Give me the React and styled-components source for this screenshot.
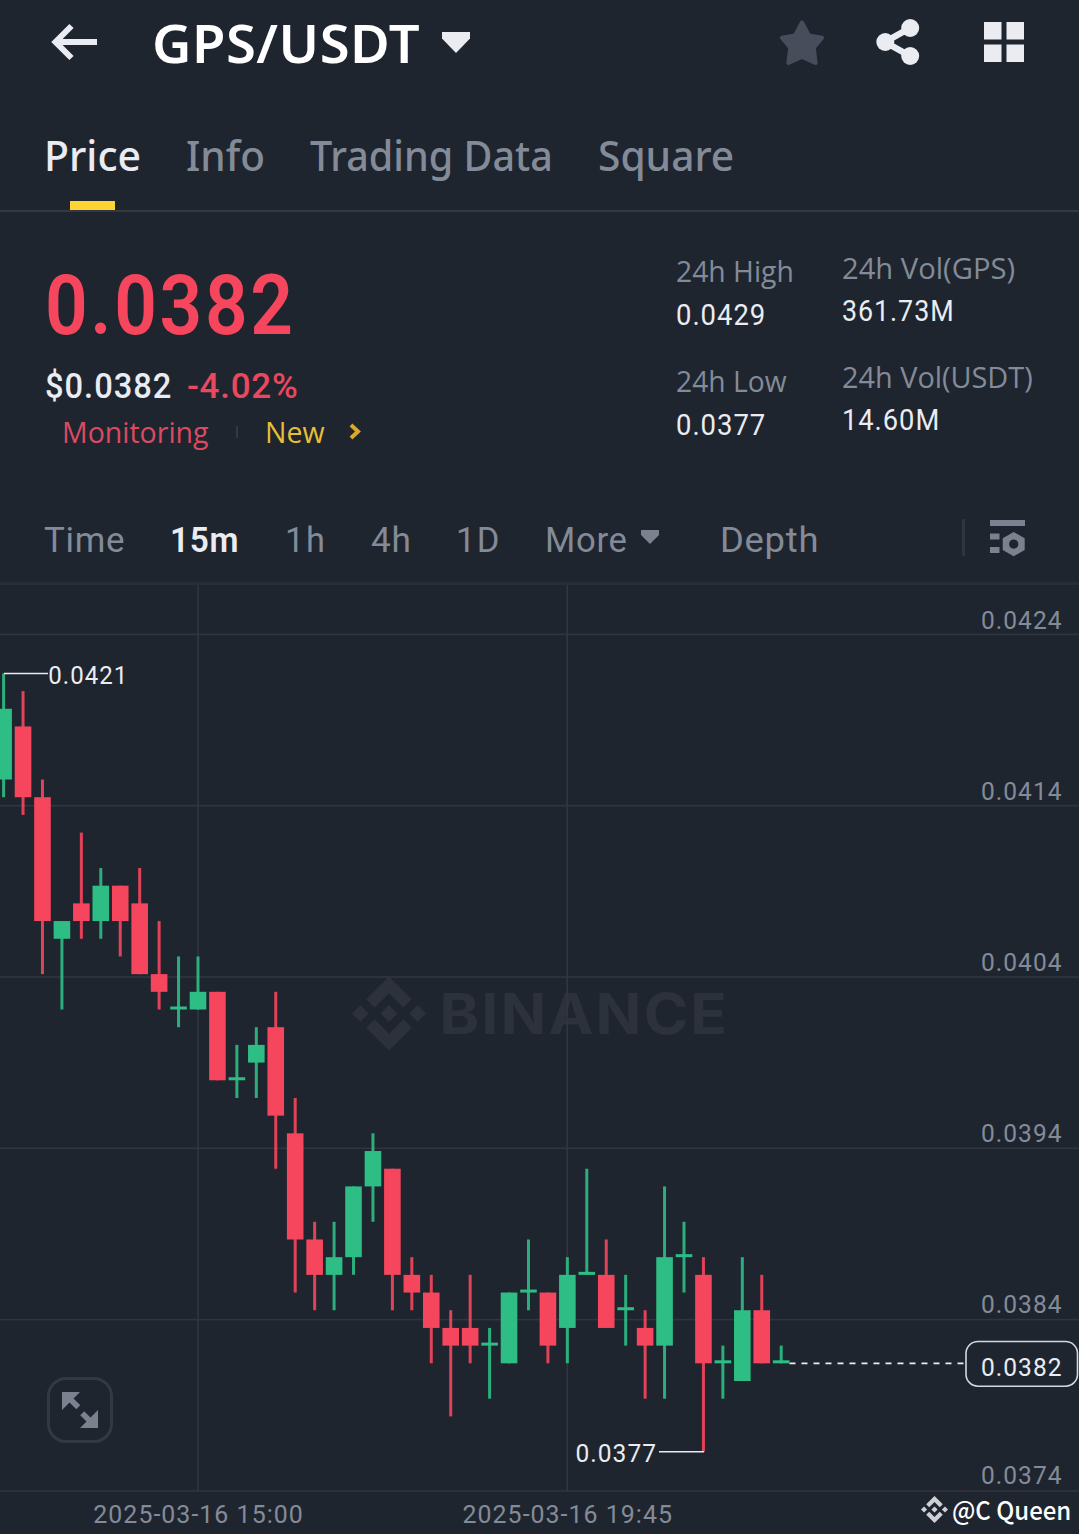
import { useLayoutEffect, useRef, useState } from "react";
import styled, { createGlobalStyle, css } from "styled-components";

const colors = {
  bg: "#1f252f",
  line: "#333842",
  grid: "#31353f",
  muted: "#848b98",
  icon: "#7b818e",
  text: "#eaecf2",
  red: "#f6465d",
  green: "#2ebd85",
  yellow: "#fcd535",
};

const din = '"Roboto", "Liberation Sans", sans-serif';
const plex = '"Open Sans", "Noto Sans", sans-serif';
const plexMedium = '"Noto Sans", "Open Sans", sans-serif';

const GlobalStyle = createGlobalStyle`
  body {
    margin: 0;
    background-color: ${colors.bg};
    overflow: hidden;
  }
`;

const Page = styled.div`
  width: 1079px;
  height: 1534px;
  overflow: hidden;
  background-color: ${colors.bg};
  color: ${colors.text};
`;

const LabelBox = styled.span`
  display: block;
  flex: none;
  white-space: nowrap;
  width: ${({ $width }) => $width}px;
  font-family: ${({ $font }) => $font || din};
  font-size: ${({ $size }) => $size}px;
  font-weight: ${({ $weight }) => $weight || 400};
  letter-spacing: ${({ $spacing }) => $spacing}px;
  line-height: 1;
  color: ${({ $color }) => $color || colors.text};
`;

const LabelText = styled.span`
  display: inline-block;
  vertical-align: top;
  transform-origin: 0 0;
`;

// text squeezed or stretched to a fixed width
const Label = ({ children, width, size, weight, color, font, tracking = 0 }) => {
  const ref = useRef(null);
  const [scale, setScale] = useState(1);
  const spacing = tracking * size;

  useLayoutEffect(() => {
    setScale(width / (ref.current.offsetWidth - spacing));
  }, [width, spacing, children]);

  return (
    <LabelBox
      $width={width}
      $size={size}
      $weight={weight}
      $color={color}
      $font={font}
      $spacing={spacing}
    >
      <LabelText ref={ref} style={{ transform: `scaleX(${scale})` }}>
        {children}
      </LabelText>
    </LabelBox>
  );
};

const Icon = styled.svg`
  display: block;
  flex: none;
  margin-left: ${({ $gap }) => $gap || 0}px;
`;

const Header = styled.header`
  display: flex;
  align-items: center;
  height: 84px;
  padding: 0 55px 0 51px;
`;

const Pair = styled.div`
  display: flex;
  align-items: center;
  margin-left: 55px;
`;

const Actions = styled.div`
  display: flex;
  align-items: center;
  margin-left: auto;
`;

const Tabs = styled.nav`
  display: flex;
  gap: 45px;
  height: 75px;
  padding: 51px 0 0 44px;
  border-bottom: 2px solid ${colors.line};
`;

const Tab = styled.div`
  display: flex;
  flex-direction: column;
  justify-content: space-between;
  align-items: center;

  ${({ $active }) =>
    $active &&
    css`
      &::after {
        content: "";
        width: 45px;
        height: 9px;
        background-color: ${colors.yellow};
      }
    `}
`;

const Summary = styled.section`
  display: flex;
  height: 286px;
`;

const PriceColumn = styled.div`
  width: 631px;
  padding: 52px 0 0 45px;
`;

const SubPrice = styled.div`
  display: flex;
  gap: 16px;
  margin-top: 22px;
`;

const TagRow = styled.div`
  display: flex;
  align-items: center;
  margin-top: 14px;
  padding-left: 17px;
`;

const TagDivider = styled.i`
  width: 2px;
  height: 12px;
  margin: 0 27px 0 27px;
  background-color: #343944;
`;

const StatColumn = styled.div`
  display: flex;
  flex-direction: column;
  gap: ${({ $gap }) => $gap}px;
  width: 166px;
  padding-top: ${({ $top }) => $top}px;
`;

const Stat = styled.div`
  display: flex;
  flex-direction: column;
  gap: ${({ $gap }) => $gap}px;
`;

const Toolbar = styled.div`
  display: flex;
  align-items: center;
  height: 84px;
  padding: 0 54px 0 44px;
  border-bottom: 3px solid #292d38;
`;

const Intervals = styled.div`
  display: flex;
  align-items: center;
  gap: 46px;
`;

const MoreButton = styled.div`
  display: flex;
  align-items: center;
  padding-right: 15px;
`;

const ToolbarDivider = styled.i`
  width: 3px;
  height: 37px;
  margin: 0 25px 6px auto;
  background-color: #2f343f;
`;

const ChartArea = styled.section`
  position: relative;
  height: 949px;
`;

const ChartSvg = styled.svg`
  display: block;

  text {
    font-family: ${din};
    font-size: 26.5px;
  }
`;

const ExpandButton = styled.button`
  position: absolute;
  left: 47px;
  top: 792px;
  width: 66px;
  height: 66px;
  padding: 0;
  display: flex;
  align-items: center;
  justify-content: center;
  border: 3px solid #333843;
  border-radius: 19px;
  background-color: ${colors.bg};
`;

const Handle = styled.div`
  position: absolute;
  left: 921px;
  top: 911px;
  display: flex;
  align-items: center;
  gap: 4px;
`;

const binancePath =
  "M38.73 53.2l24.59-24.58 24.6 24.6 14.3-14.31L63.32 0 24.42 38.9z M0 63.31l14.3-14.31 14.31 14.31-14.31 14.3z M38.73 73.41l24.59 24.59 24.6-24.6 14.31 14.29-38.9 38.91-38.91-38.88z M98 63.31l14.3-14.31 14.31 14.3-14.31 14.32z M77.83 63.3L63.32 48.78 48.81 63.28l14.51 14.5z";

const tabs = [
  { name: "Price", width: 97 },
  { name: "Info", width: 79 },
  { name: "Trading Data", width: 243 },
  { name: "Square", width: 136 },
];

const statColumns = [
  {
    top: 44,
    gap: 36,
    statGap: 16,
    items: [
      { name: "24h High", nameWidth: 118, value: "0.0429", width: 89 },
      { name: "24h Low", nameWidth: 111, value: "0.0377", width: 89 },
    ],
  },
  {
    top: 41,
    gap: 36,
    statGap: 15,
    items: [
      { name: "24h Vol(GPS)", nameWidth: 173, value: "361.73M", width: 112 },
      { name: "24h Vol(USDT)", nameWidth: 191, value: "14.60M", width: 97 },
    ],
  },
];

const intervals = [
  { name: "Time", width: 80 },
  { name: "15m", width: 69, active: true },
  { name: "1h", width: 39.5, tracking: 0.05 },
  { name: "4h", width: 39.5 },
  { name: "1D", width: 43, tracking: 0.04 },
];

// [up, high, top, bottom, low] in ticks below 0.0421
const candles = [
  [1, 0, 2, 6, 7],
  [0, 1, 3, 7, 8],
  [0, 6, 7, 14, 17],
  [1, 14, 14, 15, 19],
  [0, 9, 13, 14, 15],
  [1, 11, 12, 14, 15],
  [0, 12, 12, 14, 16],
  [0, 11, 13, 17, 17],
  [0, 14, 17, 18, 19],
  [1, 16, 19, 19, 20],
  [1, 16, 18, 19, 19],
  [0, 18, 18, 23, 23],
  [1, 21, 23, 23, 24],
  [1, 20, 21, 22, 24],
  [0, 18, 20, 25, 28],
  [0, 24, 26, 32, 35],
  [0, 31, 32, 34, 36],
  [1, 31, 33, 34, 36],
  [1, 29, 29, 33, 34],
  [1, 26, 27, 29, 31],
  [0, 28, 28, 34, 36],
  [0, 33, 34, 35, 36],
  [0, 34, 35, 37, 39],
  [0, 36, 37, 38, 42],
  [0, 34, 37, 38, 39],
  [1, 37, 38, 38, 41],
  [1, 35, 35, 39, 39],
  [1, 32, 35, 35, 36],
  [0, 35, 35, 38, 39],
  [1, 33, 34, 37, 39],
  [1, 28, 34, 34, 34],
  [0, 32, 34, 37, 37],
  [1, 34, 36, 36, 38],
  [0, 36, 37, 38, 41],
  [1, 29, 33, 38, 41],
  [1, 31, 33, 33, 35],
  [0, 33, 34, 39, 44],
  [1, 38, 39, 39, 41],
  [1, 33, 36, 40, 40],
  [0, 34, 36, 39, 39],
  [1, 38, 39, 39, 39],
];

const axis = ["0.0424", "0.0414", "0.0404", "0.0394", "0.0384", "0.0374"];

const yOf = (tick) => 673.4 + tick * 17.69;
const xOf = (idx) => 3.6 + idx * 19.44;

const ChartText = ({ x, y, width, color, children }) => (
  <text
    x={x}
    y={y}
    fill={color}
    letterSpacing="1.1"
    textLength={width}
    lengthAdjust="spacingAndGlyphs"
  >
    {children}
  </text>
);

const Chart = () => (
  <ChartSvg width="1079" height="949" viewBox="0 585 1079 949">
    <g fill="#2d313c">
      <path d={binancePath} transform="translate(352 976.5) scale(0.584)" />
      <text
        x="439.5"
        y="1033.5"
        textLength="289.5"
        letterSpacing="2"
        lengthAdjust="spacingAndGlyphs"
        style={{ fontFamily: "Inter", fontWeight: 700, fontSize: 56 }}
      >
        BINANCE
      </text>
    </g>
    <g fill={colors.grid}>
      {axis.map((label, idx) => (
        <rect key={label} x="0" y={633.6 + idx * 171.3} width="1079" height="1.6" />
      ))}
      <rect x="197.2" y="585" width="1.6" height="906" />
      <rect x="566.4" y="585" width="1.6" height="906" />
    </g>
    {axis.map((label, idx) => (
      <ChartText key={label} x={981} y={628.5 + idx * 171.1} width={81.5} color={colors.muted}>
        {label}
      </ChartText>
    ))}
    {candles.map(([up, high, top, bottom, low], idx) => {
      const doji = top === bottom;
      return (
        <g key={idx} fill={up ? colors.green : colors.red}>
          <rect
            x={xOf(idx) - 1.5}
            y={yOf(high)}
            width="3"
            height={(low - high) * 17.69}
            opacity="0.9"
          />
          <rect
            x={xOf(idx) - 8.3}
            y={doji ? yOf(top) - 3 : yOf(top)}
            width="16.6"
            height={doji ? 3 : (bottom - top) * 17.69}
          />
        </g>
      );
    })}
    <path
      d="M4 673.5H48M659 1451.8H704"
      stroke={colors.text}
      strokeWidth="1.6"
      fill="none"
    />
    <ChartText x={48.3} y={683.5} width={80} color={colors.text}>
      0.0421
    </ChartText>
    <ChartText x={575.5} y={1462} width={81.5} color={colors.text}>
      0.0377
    </ChartText>
    <path
      d="M789.5 1363.4H965"
      stroke={colors.text}
      strokeWidth="1.6"
      strokeDasharray="6 6"
      fill="none"
    />
    <rect
      x="966"
      y="1341.5"
      width="111.5"
      height="44.7"
      rx="12"
      fill={colors.bg}
      stroke="#d5d8dd"
      strokeWidth="1.6"
    />
    <ChartText x={981} y={1376} width={81.5} color={colors.text}>
      0.0382
    </ChartText>
    <ChartText x={93.3} y={1523} width={210.5} color={colors.muted}>
      2025-03-16 15:00
    </ChartText>
    <ChartText x={462.5} y={1523} width={210.5} color={colors.muted}>
      2025-03-16 19:45
    </ChartText>
  </ChartSvg>
);

const App = () => {
  return (
    <Page>
      <GlobalStyle />
      <Header>
        <Icon width="46" height="38" viewBox="51 23 46 38">
          <path
            d="M97 42H55M71.5 26L55.5 42L71.5 58"
            fill="none"
            stroke={colors.text}
            strokeWidth="6"
          />
        </Icon>
        <Pair>
          <Label width={268} size={53} weight={600} font={plexMedium} color="#fff" tracking={0.01}>
            GPS/USDT
          </Label>
          <Icon $gap={22} width="28" height="22" viewBox="0 -0.5 28 22">
            <path d="M0 0.5H28V7L14 21.5L0 7Z" fill={colors.text} />
          </Icon>
        </Pair>
        <Actions>
          <Icon width="46" height="46" viewBox="0 -1 46 46">
            <path
              d="M23 2.5L30 15.5L43 17.8L34.8 27.8L36.6 43L23 37L9.4 43L11.2 27.8L3 17.8L16 15.5Z"
              fill="#474d5a"
              stroke="#474d5a"
              strokeWidth="4"
              strokeLinejoin="round"
            />
          </Icon>
          <Icon $gap={51} width="44" height="46" viewBox="0 0 44 46">
            <path d="M34 9L9 23L34 37" fill="none" stroke={colors.text} strokeWidth="6.5" />
            <circle cx="9.3" cy="23" r="9" fill={colors.text} />
            <circle cx="34.2" cy="9" r="9" fill={colors.text} />
            <circle cx="34.2" cy="37" r="9" fill={colors.text} />
          </Icon>
          <Icon $gap={64} width="40" height="40" viewBox="0 0 40 40">
            <path
              d="M0 0H17.5V17.5H0ZM22.5 0H40V17.5H22.5ZM0 22.5H17.5V40H0ZM22.5 22.5H40V40H22.5Z"
              fill={colors.text}
            />
          </Icon>
        </Actions>
      </Header>

      <Tabs>
        {tabs.map(({ name, width }, idx) => (
          <Tab key={name} $active={idx === 0}>
            <Label
              width={width}
              size={41}
              weight={500}
              font={plexMedium}
              color={idx === 0 ? colors.text : colors.muted}
            >
              {name}
            </Label>
          </Tab>
        ))}
      </Tabs>

      <Summary>
        <PriceColumn>
          <Label width={248} size={83} weight={600} color={colors.red} tracking={0.035}>
            0.0382
          </Label>
          <SubPrice>
            <Label width={126} size={34.5} weight={500} tracking={0.03}>
              $0.0382
            </Label>
            <Label width={111} size={34.5} weight={500} color="#e8495f" tracking={0.02}>
              -4.02%
            </Label>
          </SubPrice>
          <TagRow>
            <Label width={147} size={28.5} font={plex} color="#dc4a61">
              Monitoring
            </Label>
            <TagDivider />
            <Label width={60} size={28.5} font={plex} color="#e6bf35">
              New
            </Label>
            <Icon $gap={24} width="12" height="17" viewBox="0 0 12 17">
              <path d="M2 2L9 8.5L2 15" fill="none" stroke="#d9a92c" strokeWidth="4" />
            </Icon>
          </TagRow>
        </PriceColumn>
        {statColumns.map(({ top, gap, statGap, items }) => (
          <StatColumn key={top} $top={top} $gap={gap}>
            {items.map(({ name, nameWidth, value, width }) => (
              <Stat key={name} $gap={statGap}>
                <Label width={nameWidth} size={29} font={plex} color={colors.muted}>
                  {name}
                </Label>
                <Label width={width} size={29} tracking={0.035}>
                  {value}
                </Label>
              </Stat>
            ))}
          </StatColumn>
        ))}
      </Summary>

      <Toolbar>
        <Intervals>
          {intervals.map(({ name, width, active, tracking }) => (
            <Label
              key={name}
              width={width}
              size={35}
              weight={active ? 600 : 400}
              color={active ? colors.text : colors.muted}
              tracking={tracking || 0.02}
            >
              {name}
            </Label>
          ))}
          <MoreButton>
            <Label width={81.5} size={35} color={colors.muted} tracking={0.02}>
              More
            </Label>
            <Icon $gap={14} width="18" height="20" viewBox="0 0 18 20">
              <path d="M0 0H18V5L9 14L0 5Z" fill={colors.icon} />
            </Icon>
          </MoreButton>
          <Label width={98} size={35} color={colors.muted} tracking={0.02}>
            Depth
          </Label>
        </Intervals>
        <ToolbarDivider />
        <Icon width="35" height="40" viewBox="990 520 35 40">
          <path d="M990 520H1025V526H990ZM990 533.5H999.5V539.5H990ZM990 547H999.5V553H990Z" fill={colors.icon} />
          <path
            fillRule="evenodd"
            d="M1013.7 532L1024.7 538.2V550L1013.7 556.2L1002.7 550V538.2ZM1013.7 539.5a4.6 4.6 0 1 0 0.01 0Z"
            fill={colors.icon}
          />
        </Icon>
      </Toolbar>

      <ChartArea>
        <Chart />
        <ExpandButton>
          <svg width="36" height="36" viewBox="0 0 36 36" fill={colors.icon}>
            <path d="M0 0H18L11.5 6.5L18.3 13.3L14.3 17.3L7.5 10.5L0 18Z" />
            <path d="M36 36H18L24.5 29.5L18.2 23.2L22.2 19.2L28.5 25.5L36 18Z" />
          </svg>
        </ExpandButton>
        <Handle>
          <svg width="27" height="27" viewBox="0 0 126.61 126.61" fill="#cdd0d4">
            <path d={binancePath} />
          </svg>
          <Label width={119} size={25} weight={500} color="#fff" font={'"Noto Sans CJK SC", sans-serif'}>
            @C Queen
          </Label>
        </Handle>
      </ChartArea>
    </Page>
  );
};

export default App;
